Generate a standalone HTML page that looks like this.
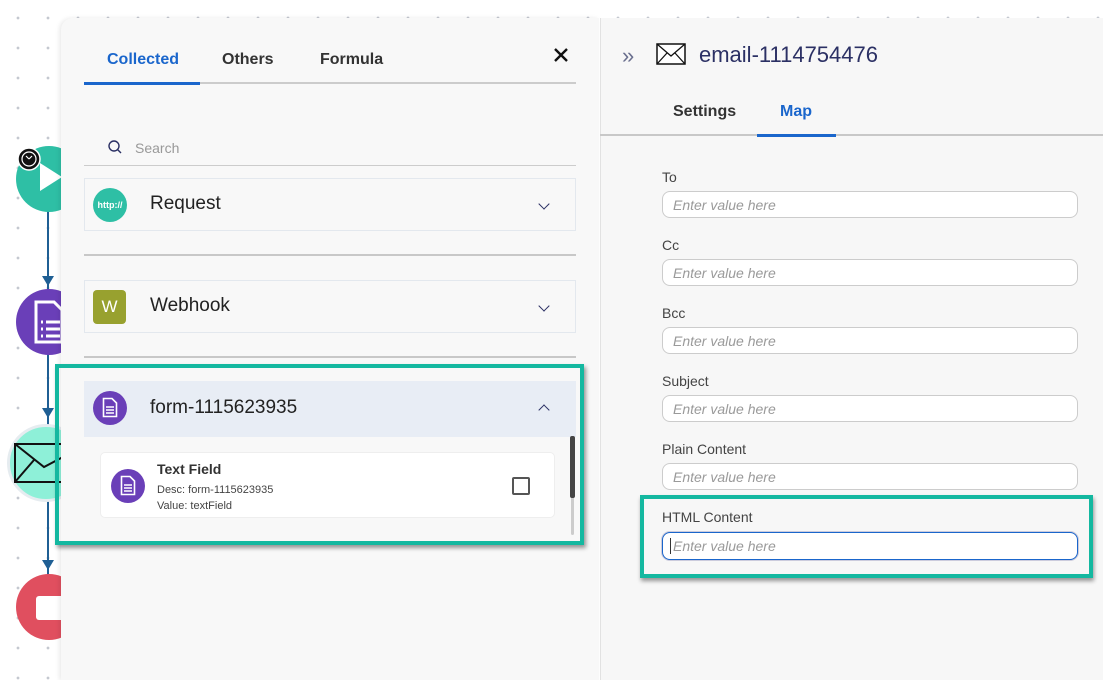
<!DOCTYPE html>
<html><head><style>
*{box-sizing:border-box;margin:0;padding:0}
body{width:1103px;height:680px;overflow:hidden;position:relative;background:#fff;font-family:"Liberation Sans",sans-serif;
background-image:radial-gradient(circle,#c4c8d0 1.2px,transparent 1.6px);background-size:30px 30px;background-position:3px 3px}
.abs{position:absolute}
.node{position:absolute;border-radius:50%;width:66px;height:66px}
.lp{position:absolute;left:61px;top:18px;width:538px;height:662px;background:#f8f8f8;border-radius:12px 0 0 0;box-shadow:-2px 0 4px rgba(0,0,0,.08)}
.rp{position:absolute;left:600px;top:18px;width:503px;height:662px;background:#f7f7f7;border-left:1px solid #e2e2e2}
.tab{position:absolute;font-size:16px;color:#333;font-weight:bold}
.box{position:absolute;left:84px;width:492px;border:1px solid #e3e8ee;background:#f8f8f8}
.sep{position:absolute;left:84px;width:492px;height:2px;background:#c8c8c8}
.name{position:absolute;left:150px;font-size:19px;color:#222}
.chev{position:absolute;left:540px;width:8px;height:8px;border-right:1.6px solid #2b3064;border-bottom:1.6px solid #2b3064;transform:rotate(45deg)}
.lbl{position:absolute;left:662px;font-size:14px;color:#444}
.inp{position:absolute;left:662px;width:416px;height:27px;border:1px solid #ccc;border-radius:8px;background:#fff;font-size:14px;font-style:italic;color:#9a9a9a;padding:5px 10px}
</style></head><body>
<!-- flow -->
<div class="abs" style="left:47px;top:210px;width:2px;height:375px;background:#1f5f94"></div>
<div class="abs" style="left:42px;top:276px;border:6px solid transparent;border-top:10px solid #1f5f94"></div>
<div class="abs" style="left:42px;top:408px;border:6px solid transparent;border-top:10px solid #1f5f94"></div>
<div class="abs" style="left:42px;top:560px;border:6px solid transparent;border-top:10px solid #1f5f94"></div>
<div class="node" style="left:16px;top:146px;background:#2ebfa5"></div>
<div class="abs" style="left:40px;top:163px;border-left:22px solid #fff;border-top:14px solid transparent;border-bottom:14px solid transparent"></div>
<svg class="abs" style="left:17px;top:147px" width="24" height="24"><circle cx="12" cy="12" r="11" fill="#111" stroke="#fff" stroke-width="1.5"/><circle cx="12" cy="12" r="7" fill="none" stroke="#fff" stroke-width="1.2"/><path d="M12 12L9 9M12 12L15 9" stroke="#fff" stroke-width="1.2"/></svg>
<div class="node" style="left:16px;top:289px;background:#6a3fb8"></div>
<svg class="abs" style="left:34px;top:300px" width="30" height="44"><path d="M2 2H20L28 10V42H2Z" fill="none" stroke="#fff" stroke-width="3"/><path d="M7 22H9M12 22H26M7 29H9M12 29H26M7 36H9M12 36H26" stroke="#fff" stroke-width="3"/></svg>
<div class="node" style="left:7px;top:424px;width:78px;height:78px;background:#8ef0d8;border:3px solid #e6ecf0"></div>
<svg class="abs" style="left:14px;top:443px" width="50" height="40"><rect x="1" y="1" width="48" height="38" fill="none" stroke="#111" stroke-width="2"/><path d="M1 1L30 24L49 14M1 39L20 17" fill="none" stroke="#111" stroke-width="2"/></svg>
<div class="node" style="left:16px;top:574px;background:#e04f5f"></div>
<div class="abs" style="left:36px;top:596px;width:30px;height:24px;background:#fff;border-radius:3px"></div>

<div class="lp"></div>
<div class="tab" style="left:107px;top:51px;color:#1a66cc">Collected</div>
<div class="tab" style="left:222px;top:51px">Others</div>
<div class="tab" style="left:320px;top:51px">Formula</div>
<svg class="abs" style="left:553px;top:47px" width="16" height="16"><path d="M2 2L14 14M14 2L2 14" stroke="#111" stroke-width="2.4"/></svg>
<div class="abs" style="left:84px;top:82px;width:492px;height:2px;background:#ccc"></div>
<div class="abs" style="left:84px;top:82px;width:116px;height:3px;background:#1a66cc"></div>
<svg class="abs" style="left:107px;top:139px" width="16" height="16"><circle cx="7" cy="7" r="5" fill="none" stroke="#2b3064" stroke-width="1.4"/><path d="M10.5 10.5L14 14" stroke="#2b3064" stroke-width="1.4"/></svg>
<div class="abs" style="left:135px;top:140px;font-size:14px;color:#999">Search</div>
<div class="abs" style="left:84px;top:165px;width:492px;height:1px;background:#ccc"></div>
<div class="box" style="top:178px;height:53px"></div>
<div class="abs" style="left:93px;top:188px;width:34px;height:34px;border-radius:50%;background:#2ebfa5;color:#fff;font-size:9px;font-weight:bold;text-align:center;line-height:34px">http://</div>
<div class="name" style="top:193px">Request</div>
<div class="chev" style="top:200px"></div>
<div class="sep" style="top:254px"></div>
<div class="box" style="top:280px;height:53px"></div>
<div class="abs" style="left:93px;top:290px;width:33px;height:34px;border-radius:4px;background:#98a12f;color:#fff;font-size:17px;text-align:center;line-height:34px">W</div>
<div class="name" style="top:295px">Webhook</div>
<div class="chev" style="top:302px"></div>
<div class="sep" style="top:356px"></div>
<!-- form section -->
<div class="abs" style="left:55px;top:364px;width:529px;height:181px;border:4px solid #14b8a0;box-shadow:2px 3px 4px rgba(0,0,0,.4)"></div>
<div class="abs" style="left:84px;top:381px;width:492px;height:56px;background:#e8edf5"></div>
<div class="abs" style="left:93px;top:391px;width:34px;height:34px;border-radius:50%;background:#6a3fb8"></div>
<svg class="abs" style="left:102px;top:397px" width="16" height="21"><path d="M1.5 1.5H10L14.5 6V19.5H1.5Z" fill="none" stroke="#fff" stroke-width="1.6"/><path d="M4 10H12M4 13H12M4 16H12" stroke="#fff" stroke-width="1.4"/></svg>
<div class="name" style="top:397px">form-1115623935</div>
<div class="chev" style="top:406px;transform:rotate(225deg)"></div>
<div class="abs" style="left:100px;top:452px;width:455px;height:66px;background:#fff;border-radius:5px;border:1px solid #eee"></div>
<div class="abs" style="left:111px;top:469px;width:34px;height:34px;border-radius:50%;background:#6a3fb8"></div>
<svg class="abs" style="left:120px;top:475px" width="16" height="21"><path d="M1.5 1.5H10L14.5 6V19.5H1.5Z" fill="none" stroke="#fff" stroke-width="1.6"/><path d="M4 10H12M4 13H12M4 16H12" stroke="#fff" stroke-width="1.4"/></svg>
<div class="abs" style="left:157px;top:461px;font-size:14px;font-weight:bold;color:#333">Text Field</div>
<div class="abs" style="left:157px;top:482px;font-size:11px;color:#444;line-height:16px">Desc: form-1115623935<br>Value: textField</div>
<div class="abs" style="left:512px;top:477px;width:18px;height:18px;border:2px solid #555;border-radius:2px"></div>
<div class="abs" style="left:571px;top:437px;width:3px;height:98px;background:#ccc;border-radius:2px"></div>
<div class="abs" style="left:570px;top:436px;width:5px;height:62px;background:#444;border-radius:2px"></div>

<div class="rp"></div>
<div class="abs" style="left:622px;top:43px;font-size:22px;color:#6a6f8e">»</div>
<svg class="abs" style="left:656px;top:43px" width="30" height="22"><rect x="1" y="1" width="28" height="20" fill="#fff" stroke="#111" stroke-width="1.5"/><path d="M1 1L15 13L29 1M1 21L11 10M29 21L19 10" fill="none" stroke="#111" stroke-width="1.3"/></svg>
<div class="abs" style="left:699px;top:42px;font-size:22px;color:#2b3064">email-1114754476</div>
<div class="tab" style="left:673px;top:103px">Settings</div>
<div class="tab" style="left:780px;top:103px;color:#1a66cc">Map</div>
<div class="abs" style="left:600px;top:134px;width:503px;height:2px;background:#c8c8c8"></div>
<div class="abs" style="left:757px;top:134px;width:79px;height:3px;background:#1a66cc"></div>

<div class="lbl" style="top:169px">To</div><div class="inp" style="top:191px">Enter value here</div>
<div class="lbl" style="top:237px">Cc</div><div class="inp" style="top:259px">Enter value here</div>
<div class="lbl" style="top:305px">Bcc</div><div class="inp" style="top:327px">Enter value here</div>
<div class="lbl" style="top:373px">Subject</div><div class="inp" style="top:395px">Enter value here</div>
<div class="lbl" style="top:441px">Plain Content</div><div class="inp" style="top:463px">Enter value here</div>
<div class="abs" style="left:640px;top:495px;width:453px;height:83px;border:4px solid #14b8a0;box-shadow:1px 3px 4px rgba(0,0,0,.4)"></div>
<div class="lbl" style="top:509px">HTML Content</div>
<div class="inp" style="top:532px;height:28px;border:1.5px solid #1a66cc;box-shadow:0 0 0 1px #ccd">Enter value here</div>
<div class="abs" style="left:670px;top:538px;width:1px;height:16px;background:#333"></div>
</body></html>
